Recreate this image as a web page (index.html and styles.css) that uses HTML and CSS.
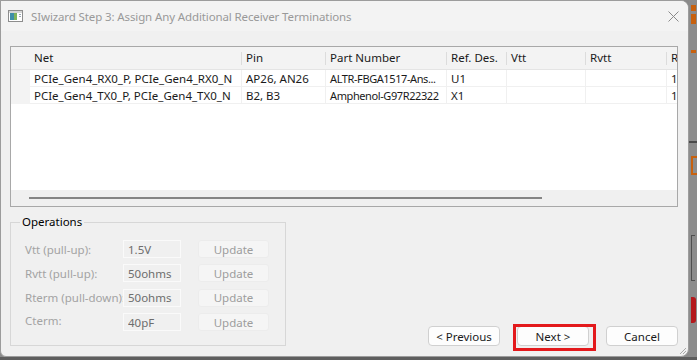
FILE: index.html
```html
<!DOCTYPE html>
<html lang="en">
<head>
    <meta charset="UTF-8">
    <title>SIwizard Step 3</title>
    <link rel="stylesheet" href="styles.css">
</head>
<body>
    <div class="screen">
        <div class="top">
            <div class="dialog">
                <div class="titlebar">
                    <svg class="app-icon" width="15" height="12" viewBox="0 0 15 12">
                        <rect x="0.5" y="0.5" width="14" height="11" fill="#fff" stroke="#8d8d8d"/>
                        <rect x="1" y="1" width="13" height="2" fill="#d6d6d6"/>
                        <rect x="2" y="3" width="4" height="7" fill="#3f8fa8"/>
                        <rect x="6" y="3" width="3" height="7" fill="#7fb35d"/>
                        <rect x="11" y="4" width="2" height="1" fill="#9aa7b2"/>
                        <rect x="11" y="6" width="2" height="1" fill="#9aa7b2"/>
                    </svg>
                    <span class="title">SIwizard Step 3: Assign Any Additional Receiver Terminations</span>
                    <svg class="close" width="11" height="11" viewBox="0 0 11 11">
                        <path d="M0.5 0.5 L10.5 10.5 M10.5 0.5 L0.5 10.5" stroke="#8a8a8a" stroke-width="1"/>
                    </svg>
                </div>

                <div class="content">
                    <div class="grid">
                        <div class="grid-row grid-head">
                            <span class="rowhead"></span>
                            <span>Net</span>
                            <span>Pin</span>
                            <span>Part Number</span>
                            <span>Ref. Des.</span>
                            <span>Vtt</span>
                            <span>Rvtt</span>
                            <span>Rterm</span>
                        </div>
                        <div class="grid-row">
                            <span class="rowhead"></span>
                            <span>PCIe_Gen4_RX0_P, PCIe_Gen4_RX0_N</span>
                            <span>AP26, AN26</span>
                            <span class="part">ALTR-FBGA1517-Ans...</span>
                            <span>U1</span>
                            <span></span>
                            <span></span>
                            <span>1.5V</span>
                        </div>
                        <div class="grid-row">
                            <span class="rowhead"></span>
                            <span>PCIe_Gen4_TX0_P, PCIe_Gen4_TX0_N</span>
                            <span>B2, B3</span>
                            <span class="part">Amphenol-G97R22322</span>
                            <span>X1</span>
                            <span></span>
                            <span></span>
                            <span>1.5V</span>
                        </div>
                        <div class="grid-fill"></div>
                        <div class="hscroll"><div class="thumb"></div></div>
                    </div>

                    <div class="bottom">
                        <fieldset class="ops">
                            <legend>Operations</legend>
                            <div class="op-list">
                                <div class="op-row">
                                    <label>Vtt (pull-up):</label>
                                    <input type="text" value="1.5V" disabled>
                                    <button disabled>Update</button>
                                </div>
                                <div class="op-row">
                                    <label>Rvtt (pull-up):</label>
                                    <input type="text" value="50ohms" disabled>
                                    <button disabled>Update</button>
                                </div>
                                <div class="op-row">
                                    <label>Rterm (pull-down):</label>
                                    <input type="text" value="50ohms" disabled>
                                    <button disabled>Update</button>
                                </div>
                                <div class="op-row">
                                    <label class="raised">Cterm:</label>
                                    <input type="text" value="40pF" disabled>
                                    <button disabled>Update</button>
                                </div>
                            </div>
                        </fieldset>

                        <div class="nav">
                            <button class="nav-btn">&lt; Previous</button>
                            <span class="marked"><button class="nav-btn">Next &gt;</button></span>
                            <button class="nav-btn">Cancel</button>
                        </div>
                    </div>
                </div>

                <svg class="grip" width="9" height="9" viewBox="0 0 9 9">
                    <path d="M8 2 L2 8 M8 5 L5 8" stroke="#a9a9a9" stroke-width="1"/>
                </svg>
            </div>

            <div class="side">
                <div class="glyph g1"></div>
                <div class="glyph g2"></div>
                <div class="glyph g3"></div>
                <div class="dash"></div>
                <div class="bracket"></div>
                <div class="frame"></div>
                <div class="blob"></div>
            </div>
        </div>
        <div class="under"></div>
    </div>
</body>
</html>
```

FILE: styles.css
```css
body {
    margin: 0;
    font-family: "Noto Sans", "Liberation Sans", sans-serif;
    font-size: 11.5px;
    color: #1a1a1a;
}
.screen {
    width: 697px;
    height: 360px;
    background-color: #8a8a8a;
    display: flex;
    flex-direction: column;
    overflow: hidden;
}
.top {
    display: flex;
    height: 357px;
}
.dialog {
    position: relative;
    width: 689px;
    height: 357px;
    box-sizing: border-box;
    border: 1px solid #9c9c9c;
    border-radius: 0 8px 8px 6px;
    background-color: #f0f0f0;
    overflow: hidden;
}

/* title bar */
.titlebar {
    height: 30px;
    display: flex;
    align-items: center;
    padding-left: 7px;
    background-color: #f3f3f3;
}
.app-icon {
    margin-right: 8px;
}
.title {
    color: #999;
    font-size: 11.5px;
    letter-spacing: -0.12px;
}
.close {
    margin-left: auto;
    margin-right: 9px;
}

.content {
    padding: 15px 10px 0 9px;
}

/* list */
.grid {
    height: 161px;
    box-sizing: border-box;
    border: 1px solid #a8a8a8;
    background-color: #fff;
    display: flex;
    flex-direction: column;
    overflow: hidden;
}
.grid-row {
    display: grid;
    grid-template-columns: 19px 212px 84px 121px 60px 79px 81px 80px;
    height: 17px;
    line-height: 17px;
    white-space: nowrap;
}
.grid-row span {
    padding-left: 4px;
    border-right: 1px solid #f0f0f0;
    border-bottom: 1px solid #f0f0f0;
    overflow: hidden;
    text-overflow: clip;
}
.grid-row .part {
    font-size: 11px;
    letter-spacing: -0.4px;
}
.grid-row .rowhead {
    background-color: #f3f3f3;
    border-right: none;
    border-bottom: none;
    padding: 0;
}
.grid-head {
    height: 22px;
    line-height: 21px;
    background-color: #f3f3f3;
    border-bottom: 1px solid #e4e4e4;
}
.grid-head span {
    padding-left: 4px;
    border-bottom: none;
    border-right: none;
    position: relative;
}
.grid-head span::after {
    content: "";
    position: absolute;
    right: 0;
    top: 5px;
    bottom: 4px;
    border-right: 1px solid #dcdcdc;
}
.grid-head .rowhead::after {
    display: none;
}
.grid-fill {
    flex: 1;
}
.hscroll {
    height: 16px;
    background-color: #f0f0f0;
    padding-left: 18px;
    display: flex;
    align-items: center;
}
.thumb {
    width: 513px;
    height: 2px;
    background-color: #858585;
}

/* bottom area */
.bottom {
    display: flex;
    align-items: flex-end;
    margin-top: 8px;
}
.ops {
    width: 276px;
    box-sizing: border-box;
    margin: 0;
    padding: 0 0 14px 14px;
    border: 1px solid #d7d7d7;
}
.ops legend {
    margin-left: -5px;
    padding: 0 2px;
    line-height: 14px;
    color: #000;
}
.op-list {
    margin-top: 11px;
    display: flex;
    flex-direction: column;
    gap: 6.4px;
}
.op-row {
    display: flex;
    align-items: center;
    height: 18px;
}
.op-row label {
    width: 98px;
    white-space: nowrap;
    color: #a3a3a3;
}
.op-row label.raised {
    margin-top: -4px;
}
.op-row input {
    width: 58px;
    height: 18px;
    box-sizing: border-box;
    margin: 0 17px 0 0;
    padding: 0 0 0 4px;
    border: 1px solid #fafafa;
    background-color: #f0f0f0;
    font-family: inherit;
    font-size: 11.5px;
    color: #6d6d6d;
}
.op-row button {
    width: 71px;
    height: 18px;
    padding: 0;
    border: 1px solid #ececec;
    border-radius: 3px;
    background-color: #f5f5f5;
    font-family: inherit;
    font-size: 11.5px;
    color: #9d9d9d;
}

.nav {
    margin-left: auto;
    display: flex;
    gap: 17px;
}
.nav-btn {
    width: 72px;
    height: 20px;
    padding: 0;
    border: 1px solid #d0d0d0;
    border-radius: 4px;
    background-color: #fdfdfd;
    font-family: inherit;
    font-size: 11.5px;
    color: #1a1a1a;
}
.marked {
    position: relative;
    display: flex;
}
.marked::after {
    content: "";
    position: absolute;
    left: -4px;
    right: -7px;
    top: -2px;
    bottom: -5px;
    border: 3px solid #e3191c;
}

.grip {
    position: absolute;
    right: 1px;
    bottom: 1px;
}

/* what shows of the window behind */
.side {
    flex: 1;
    display: flex;
    flex-direction: column;
    align-items: flex-start;
    background-color: #8c8c8c;
}
.glyph {
    width: 5px;
    background-color: #c8610e;
}
.g1 {
    height: 6px;
    margin: 5px 0 0 2px;
}
.g2 {
    height: 10px;
    margin: 3px 0 0 2px;
}
.g3 {
    height: 3px;
    margin: 26px 0 0 2px;
}
.dash {
    width: 8px;
    height: 2px;
    margin-top: 88px;
    background-color: #4a4a4a;
}
.bracket {
    width: 6px;
    height: 19px;
    margin: 13px 0 0 2px;
    box-sizing: border-box;
    border: 2px solid #c8610e;
    border-right: none;
}
.frame {
    width: 4px;
    height: 46px;
    margin: 60px 0 0 2px;
    box-sizing: border-box;
    border: 1px solid #4f4f4f;
    border-right: none;
}
.blob {
    width: 5px;
    height: 26px;
    margin: 16px 0 0 2px;
    border-radius: 0 3px 3px 0;
    background-color: #b4181c;
}
.under {
    height: 3px;
    background-color: #5e5e5e;
}
```
